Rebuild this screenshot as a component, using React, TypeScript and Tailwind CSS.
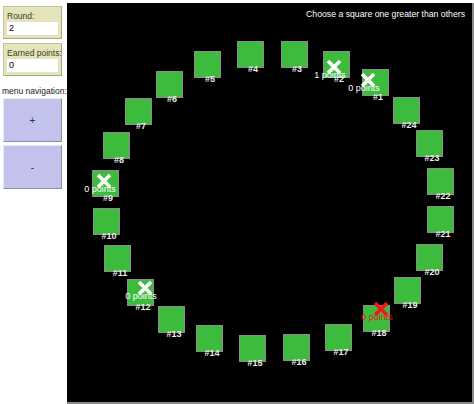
const SQUARES: { n: number; x: number; y: number }[] = [
  { n: 1, x: 362, y: 69 },
  { n: 2, x: 323, y: 51 },
  { n: 3, x: 281, y: 41 },
  { n: 4, x: 237, y: 41 },
  { n: 5, x: 194, y: 51 },
  { n: 6, x: 156, y: 71 },
  { n: 7, x: 125, y: 98 },
  { n: 8, x: 103, y: 132 },
  { n: 9, x: 92, y: 170 },
  { n: 10, x: 93, y: 208 },
  { n: 11, x: 104, y: 245 },
  { n: 12, x: 127, y: 279 },
  { n: 13, x: 158, y: 306 },
  { n: 14, x: 196, y: 325 },
  { n: 15, x: 239, y: 335 },
  { n: 16, x: 283, y: 334 },
  { n: 17, x: 325, y: 324 },
  { n: 18, x: 363, y: 305 },
  { n: 19, x: 394, y: 277 },
  { n: 20, x: 416, y: 244 },
  { n: 21, x: 427, y: 206 },
  { n: 22, x: 427, y: 168 },
  { n: 23, x: 416, y: 130 },
  { n: 24, x: 393, y: 97 },
];

// click marks, centre of the cross in page coordinates
const MARKS: { x: number; y: number; points: number; red?: boolean }[] = [
  { x: 334, y: 67, points: 1 },
  { x: 368, y: 80, points: 0 },
  { x: 104, y: 181, points: 0 },
  { x: 145, y: 288, points: 0 },
  { x: 381, y: 309, points: 0, red: true },
];

// canvas origin on the page
const OX = 67;
const OY = 3;

function Cross({ red }: { red?: boolean }) {
  return (
    <svg width="16" height="16" viewBox="0 0 16 16">
      <path
        d="M2 2L14 14M14 2L2 14"
        stroke={red ? "#f01818" : "#ffffff"}
        strokeWidth={3.6}
        strokeLinecap="butt"
      />
    </svg>
  );
}

function InfoBox({ label, value }: { label: string; value: string }) {
  return (
    <div className="w-[59px] border border-[#c4c49c] border-r-[#a8a880] border-b-[#a8a880] bg-[#e4e4bc] px-[3px] pt-[3px] pb-[3px]">
      <div className="text-[8.5px] leading-[12px] text-[#3c3c1c] whitespace-nowrap">{label}</div>
      <div className="h-[13px] bg-white pl-[2px] text-[9px] leading-[13px] text-black">{value}</div>
    </div>
  );
}

function NavButton({ label }: { label: string }) {
  return (
    <div className="flex h-[44px] w-[59px] items-center justify-center border border-t-[#e8e8f8] border-l-[#e8e8f8] border-r-[#8c8cac] border-b-[#8c8cac] bg-[#c2c2ec] text-[10px] text-[#303050]">
      {label}
    </div>
  );
}

export default function App() {
  return (
    <div
      className="flex h-[404px] w-[474px] overflow-hidden bg-white"
      style={{ fontFamily: '"Liberation Sans", Arial, sans-serif' }}
    >
      <div className="flex w-[67px] shrink-0 flex-col pl-[3px] pt-[6px]">
        <InfoBox label="Round:" value="2" />
        <div className="h-[4px]" />
        <InfoBox label="Earned points:" value="0" />
        <div className="mt-[10px] text-[8.5px] leading-[10px] text-[#202020] -ml-[1px] whitespace-nowrap">menu navigation:</div>
        <div className="mt-[2px] flex flex-col gap-[3px]">
          <NavButton label="+" />
          <NavButton label="-" />
        </div>
      </div>

      <div className="relative mt-[3px] h-[401px] flex-1 border-r-2 border-b-2 border-[#8a8a8a] bg-black">
        <div className="absolute right-[7px] top-[6px] text-[8.7px] leading-[11px] text-white whitespace-nowrap">
          Choose a square one greater than others
        </div>

        {SQUARES.map((s) => (
          <div key={s.n}>
            <div
              className="absolute h-[27px] w-[27px] border border-[#8c8c8c] bg-[#3dbb3d]"
              style={{ left: s.x - OX, top: s.y - OY }}
            />
            <div
              className="absolute w-[30px] text-center text-[9px] font-bold leading-[10px] text-[#ececec]"
              style={{ left: s.x - OX + 16 - 15, top: s.y - OY + 23 }}
            >
              #{s.n}
            </div>
          </div>
        ))}

        {MARKS.map((m, i) => (
          <div key={i}>
            <div className="absolute" style={{ left: m.x - OX - 8, top: m.y - OY - 8 }}>
              <Cross red={m.red} />
            </div>
            <div
              className={`absolute w-[50px] text-center text-[9px] leading-[10px] ${m.red ? "text-[#e01818]" : "text-white"}`}
              style={{ left: m.x - OX - 4 - 25, top: m.y - OY + 3 }}
            >
              {m.points} points
            </div>
          </div>
        ))}
      </div>
    </div>
  );
}
